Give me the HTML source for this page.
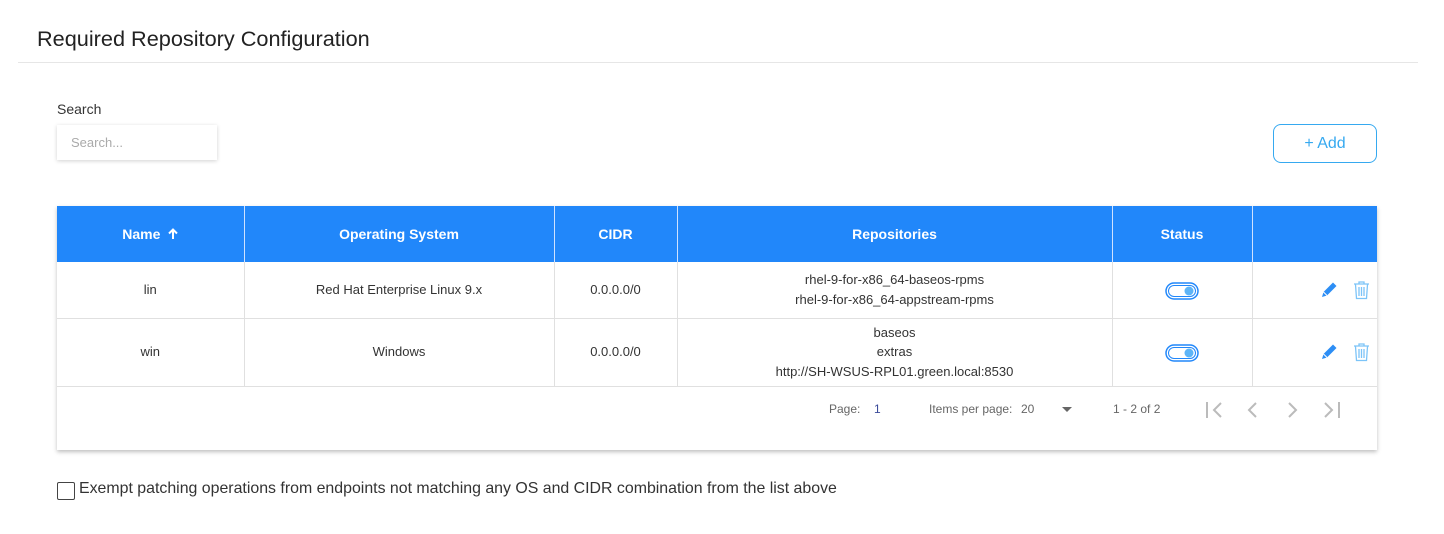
<!DOCTYPE html>
<html><head><style>
body{margin:0;width:1444px;height:534px;background:#fff;font-family:"Liberation Sans",sans-serif;position:relative;overflow:hidden}
.abs{position:absolute}
.title{left:37px;top:26px;font-size:21.7px;color:#222}
.hr{left:18px;top:62px;width:1400px;height:1px;background:#e6e6e6}
.lbl{left:57px;top:101px;font-size:14px;color:#333}
.search{left:57px;top:125px;width:160px;height:35px;box-shadow:0 1px 4px rgba(0,0,0,.18);font-size:13px;color:#aaa;line-height:35px;padding-left:14px;box-sizing:border-box}
.add{left:1273px;top:124px;width:102px;height:37px;border:1px solid #36a9f0;border-radius:8px;color:#36a9f0;font-size:16px;text-align:center;line-height:37px}
.card{left:57px;top:206px;width:1320px;height:244px;box-shadow:0 2px 4px rgba(0,0,0,.25)}
table{border-collapse:collapse;width:1320px;font-size:13px;color:#333;table-layout:fixed}
th{background:#2187fa;color:#fff;font-weight:bold;height:56px;font-size:14px;border-right:1px solid #cfe2ff;padding:0;box-sizing:border-box}
td{text-align:center;border-right:1px solid #e0e0e0;border-bottom:1px solid #e0e0e0;line-height:19.5px;padding:0}
th:last-child,td:last-child{border-right:none}
.pg{font-size:12px;color:#666;top:402px}
.chk{left:57px;top:482px;width:16px;height:16px;border:1.5px solid #444;border-radius:2px}
.ct{left:79px;top:480px;font-size:15.9px;color:#333}
</style></head><body>
<div class="abs title">Required Repository Configuration</div>
<div class="abs hr"></div>
<div class="abs lbl">Search</div>
<div class="abs search">Search...</div>
<div class="abs add">+ Add</div>
<div class="abs card">
<table>
<colgroup><col style="width:187px"><col style="width:310px"><col style="width:123px"><col style="width:435px"><col style="width:140px"><col></colgroup>
<tr><th>Name &nbsp;<svg width="10" height="12" style="vertical-align:-1px"><path d="M5 11V2M1 5.5L5 1.5l4 4" stroke="#fff" stroke-width="2" fill="none"/></svg></th><th>Operating System</th><th>CIDR</th><th>Repositories</th><th>Status</th><th></th></tr>
<tr style="height:56px"><td>lin</td><td>Red Hat Enterprise Linux 9.x</td><td>0.0.0.0/0</td><td>rhel-9-for-x86_64-baseos-rpms<br>rhel-9-for-x86_64-appstream-rpms</td><td><svg width="34" height="18" style="vertical-align:middle"><rect x="1" y="1" width="32" height="16" rx="8" fill="#fff" stroke="#2187fa" stroke-width="1.5"/><rect x="3.5" y="3.5" width="27" height="11" rx="5.5" fill="none" stroke="#2187fa"/><circle cx="24" cy="9" r="4.5" fill="#5db4f7"/></svg></td><td style="text-align:right;padding-right:1px"><svg width="56" height="20" style="vertical-align:middle"><path d="M2 17l1.5-5L13 2.5l3.5 3.5L7 15.5z" fill="#2d8ef5"/><path d="M3.5 12l3.5 3.5" stroke="#fff" stroke-width="1"/><g fill="none" stroke="#7cc4f8" stroke-width="1.3"><path d="M34 4h15M39 4V2h5v2M35.5 4.5l1 14h10l1-14M39 7v9M41.5 7v9M44 7v9"/></g></svg></td></tr>
<tr style="height:68px"><td>win</td><td>Windows</td><td>0.0.0.0/0</td><td>baseos<br>extras<br>http://SH-WSUS-RPL01.green.local:8530</td><td><svg width="34" height="18" style="vertical-align:middle"><rect x="1" y="1" width="32" height="16" rx="8" fill="#fff" stroke="#2187fa" stroke-width="1.5"/><rect x="3.5" y="3.5" width="27" height="11" rx="5.5" fill="none" stroke="#2187fa"/><circle cx="24" cy="9" r="4.5" fill="#5db4f7"/></svg></td><td style="text-align:right;padding-right:1px"><svg width="56" height="20" style="vertical-align:middle"><path d="M2 17l1.5-5L13 2.5l3.5 3.5L7 15.5z" fill="#2d8ef5"/><path d="M3.5 12l3.5 3.5" stroke="#fff" stroke-width="1"/><g fill="none" stroke="#7cc4f8" stroke-width="1.3"><path d="M34 4h15M39 4V2h5v2M35.5 4.5l1 14h10l1-14M39 7v9M41.5 7v9M44 7v9"/></g></svg></td></tr>
</table>
</div>
<div class="abs pg" style="left:829px">Page:</div>
<div class="abs pg" style="left:874px;color:#3a4a9a">1</div>
<div class="abs pg" style="left:929px">Items per page:</div>
<div class="abs pg" style="left:1021px">20</div>
<div class="abs" style="left:1062px;top:407px;border:5px solid transparent;border-top:5px solid #666;width:0;height:0"></div>
<div class="abs pg" style="left:1113px">1 - 2 of 2</div>
<svg class="abs" style="left:1200px;top:398px" width="150" height="24" fill="none" stroke="#bbb" stroke-width="2"><path d="M7 4v16M21 5l-7 7 7 7"/><path d="M56 5l-7 7 7 7"/><path d="M89 5l7 7-7 7"/><path d="M125 5l7 7-7 7M139 4v16"/></svg>
<div class="abs chk"></div>
<div class="abs ct">Exempt patching operations from endpoints not matching any OS and CIDR combination from the list above</div>
</body></html>
